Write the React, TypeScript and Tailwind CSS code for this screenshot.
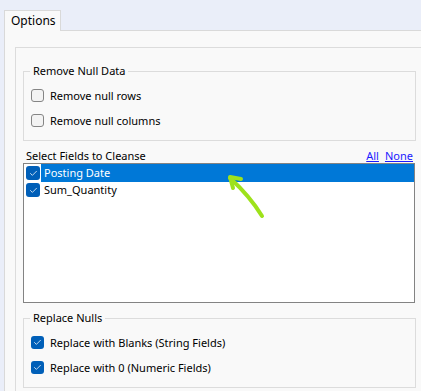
import { Check } from "lucide-react";

function Box({ checked, size = 13 }: { checked: boolean; size?: number }) {
  return checked ? (
    <span
      className="flex shrink-0 items-center justify-center rounded-[3px] bg-[#005fb8]"
      style={{ width: size, height: size }}
    >
      <Check className="w-[9px] h-[9px] text-white" strokeWidth={2} />
    </span>
  ) : (
    <span
      className="shrink-0 rounded-[3px] border border-[#858585] bg-[#f3f3f3]"
      style={{ width: size, height: size }}
    />
  );
}

function CheckRow({ label, checked }: { label: string; checked: boolean }) {
  return (
    <div className="flex items-center h-[13px] gap-[6px]">
      <Box checked={checked} />
      <span className="leading-none">{label}</span>
    </div>
  );
}

function Group({ title, children, height }: { title: string; children: React.ReactNode; height: string }) {
  return (
    <div className={`relative w-[393px] border border-[#dcdcdc] ${height}`}>
      <span className="absolute -top-[9px] left-[6px] bg-[#f9f9f9] px-[3px] leading-[16px]">{title}</span>
      {children}
    </div>
  );
}

export default function App() {
  return (
    <div
      className="relative h-screen w-full overflow-hidden bg-[#eaeef9] pt-[10px] pl-[4px] text-[11px] text-black"
      style={{ fontFamily: '"Noto Sans", "Open Sans", sans-serif' }}
    >
      {/* Tab strip */}
      <div className="flex">
        <div className="h-[21px] w-[57px] border border-b-0 border-[#d9d9d9] bg-[#f9f9f9] pl-[6px] pt-[2px] text-[12px] leading-[16px]">
          Options
        </div>
        <div className="flex-1 border-b border-[#d9d9d9]" />
      </div>

      {/* Tab pane */}
      <div className="h-full border-l border-[#d9d9d9] bg-[#f9f9f9] pl-[10px] pt-[16px]">
        <div className="h-full border-l border-t border-[#dcdcdc] pl-[7px] pt-[23px]">
          <Group title="Remove Null Data" height="h-[70px]">
            <div className="flex flex-col gap-[12px] pl-[7px] pt-[17px]">
              <CheckRow label="Remove null rows" checked={false} />
              <CheckRow label="Remove null columns" checked={false} />
            </div>
          </Group>

          <div className="mt-[8px] flex w-[393px] items-end justify-between pl-[3px] pr-[3px] leading-[14px]">
            <span>Select Fields to Cleanse</span>
            <span className="flex gap-[6px] text-[#1a1aff]">
              <span className="underline">All</span>
              <span className="underline">None</span>
            </span>
          </div>

          <div className="h-[140px] w-[392px] border border-[#838383] bg-white">
            <div className="flex h-[18px] items-center">
              <span className="ml-[2px]"><Box checked size={14} /></span>
              <div className="ml-[1px] flex h-full flex-1 items-center bg-[#0078d7] pl-[3px] text-white">Posting Date</div>
            </div>
            <div className="flex h-[16px] items-center">
              <span className="ml-[2px]"><Box checked size={14} /></span>
              <span className="ml-[4px]">Sum_Quantity</span>
            </div>
          </div>

          <div className="mt-[15px]">
            <Group title="Replace Nulls" height="h-[70px]">
              <div className="flex flex-col gap-[12px] pl-[7px] pt-[17px]">
                <CheckRow label="Replace with Blanks (String Fields)" checked />
                <CheckRow label="Replace with 0 (Numeric Fields)" checked />
              </div>
            </Group>
          </div>
        </div>
      </div>

      {/* Green annotation arrow */}
      <svg className="absolute left-[220px] top-[165px]" width="60" height="60" viewBox="0 0 60 60" fill="none">
        <path d="M42 51 C34 38 22 24 10 13" stroke="#9ee21b" strokeWidth="4" strokeLinecap="round" />
        <path d="M21 14 L10 12 L13 23" stroke="#9ee21b" strokeWidth="4" strokeLinecap="round" strokeLinejoin="round" />
      </svg>
    </div>
  );
}
